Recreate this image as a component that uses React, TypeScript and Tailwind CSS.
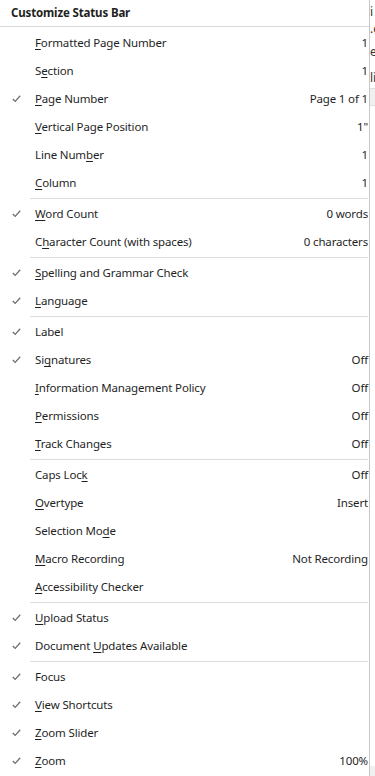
import React from "react";

type Item = {
    label: string;
    key?: number; // index of the underlined access key
    value?: string;
    checked?: boolean;
};

const groups: Item[][] = [
    [
        { label: "Formatted Page Number", key: 0, value: "1" },
        { label: "Section", key: 1, value: "1" },
        { label: "Page Number", key: 0, value: "Page 1 of 1", checked: true },
        { label: "Vertical Page Position", key: 0, value: "1\"" },
        { label: "Line Number", key: 8, value: "1" },
        { label: "Column", key: 0, value: "1" },
    ],
    [
        { label: "Word Count", key: 0, value: "0 words", checked: true },
        { label: "Character Count (with spaces)", key: 1, value: "0 characters" },
    ],
    [
        { label: "Spelling and Grammar Check", key: 0, checked: true },
        { label: "Language", key: 0, checked: true },
    ],
    [
        { label: "Label", checked: true },
        { label: "Signatures", key: 2, value: "Off", checked: true },
        { label: "Information Management Policy", key: 0, value: "Off" },
        { label: "Permissions", key: 0, value: "Off" },
        { label: "Track Changes", key: 0, value: "Off" },
    ],
    [
        { label: "Caps Lock", key: 8, value: "Off" },
        { label: "Overtype", key: 0, value: "Insert" },
        { label: "Selection Mode", key: 12 },
        { label: "Macro Recording", key: 0, value: "Not Recording" },
        { label: "Accessibility Checker", key: 0 },
    ],
    [
        { label: "Upload Status", key: 0, checked: true },
        { label: "Document Updates Available", key: 9, checked: true },
    ],
    [
        { label: "Focus", checked: true },
        { label: "View Shortcuts", key: 0, checked: true },
        { label: "Zoom Slider", key: 0, checked: true },
        { label: "Zoom", key: 0, value: "100%", checked: true },
    ],
];

const Check = () => (
    <svg width="9" height="8" viewBox="0 0 9 8" className="block">
        <polyline points="0.8,4 3.2,6.4 8.2,0.8" fill="none" stroke="#6e6e6e" strokeWidth="1.3" />
    </svg>
);

const Label = ({ text, k }: { text: string; k?: number }) => {
    if (k === undefined) return <span>{text}</span>;
    return (
        <span>
            {text.slice(0, k)}
            <span className="underline underline-offset-2 decoration-1">{text[k]}</span>
            {text.slice(k + 1)}
        </span>
    );
};

const Row = ({ item }: { item: Item }) => (
    <div className="flex items-center h-[28px] pr-px">
        <div className="w-[35px] flex justify-end pr-[14px]">{item.checked && <Check />}</div>
        <div className="flex-1 whitespace-nowrap">
            <Label text={item.label} k={item.key} />
        </div>
        {item.value && <div className="whitespace-nowrap">{item.value}</div>}
    </div>
);

export default function App() {
    return (
        <div
            className="flex w-[375px] h-[776px] overflow-hidden bg-white text-[11.5px] tracking-[-0.15px] text-[#1f1f1f]"
            style={{ fontFamily: '"Segoe UI", "Noto Sans", sans-serif' }}
        >
            {/* Menu */}
            <div className="w-[370px] shrink-0 border-r border-[#c6c6c6] bg-white">
                <div className="h-[27px] border-b border-[#dadada] pl-[11px] flex items-center font-bold">
                    Customize Status Bar
                </div>
                <div className="pt-[2px]">
                    {groups.map((g, i) => (
                        <div key={i}>
                            {i > 0 && <div className="h-[3px] pt-px pl-[30px] pr-[1px]"><div className="h-px bg-[#dcdcdc]" /></div>}
                            {g.map((item) => (
                                <Row key={item.label} item={item} />
                            ))}
                        </div>
                    ))}
                </div>
            </div>

            {/* Document peeking behind the menu */}
            <div className="flex-1 overflow-hidden flex flex-col text-[12px] leading-none tracking-normal text-[#333]">
                <div className="h-[22px] pt-[6px]">i</div>
                <div className="h-[20px] pt-[1px]">.e</div>
                <div className="h-[24px] pt-[4px]">e</div>
                <div className="h-[22px] pt-[6px]">li</div>
                <div className="h-[18px] bg-[#f0f0f0] border-y border-[#e0e0e0]" />
                <div className="flex-1" />
                <div className="h-[10px] bg-[#f0f0f0]" />
            </div>
        </div>
    );
}
